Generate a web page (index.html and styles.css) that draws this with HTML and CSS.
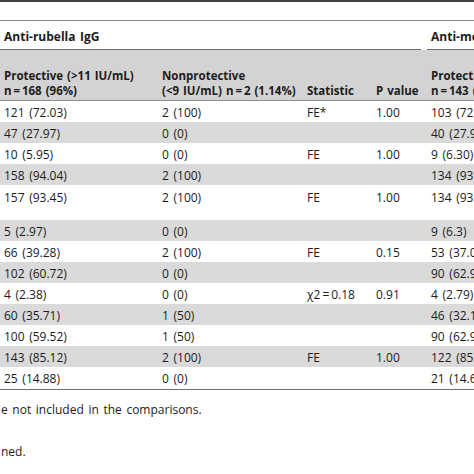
FILE: index.html
```html
<!DOCTYPE html>
<html>
<head>
<meta charset="utf-8">
<link rel="stylesheet" href="styles.css">
</head>
<body>
<div class="frame">
  <div class="topband"></div>
  <table class="t">
    <colgroup>
      <col class="c1"><col class="c2"><col class="c3"><col class="c4"><col class="c5"><col class="c6">
    </colgroup>
    <thead>
      <tr class="grp">
        <th colspan="4"><div class="gl gl-left">Anti-rubella IgG</div></th>
        <th colspan="2"><div class="gl">Anti-measles IgG</div></th>
      </tr>
      <tr class="hdr">
        <th>Protective (&gt;11 IU/mL)<br>n&thinsp;=&thinsp;168 (96%)</th>
        <th>Nonprotective<br>(&lt;9 IU/mL) n&thinsp;=&thinsp;2 (1.14%)</th>
        <th>Statistic</th>
        <th>P value</th>
        <th>Protective (&gt;11 IU/mL)<br>n&thinsp;=&thinsp;143 (95%)</th>
        <th>Nonprotective</th>
      </tr>
    </thead>
    <tbody>
      <tr><td>121 (72.03)</td><td>2 (100)</td><td>FE*</td><td>1.00</td><td>103 (72.03)</td><td></td></tr>
      <tr class="g"><td>47 (27.97)</td><td>0 (0)</td><td></td><td></td><td>40 (27.97)</td><td></td></tr>
      <tr><td>10 (5.95)</td><td>0 (0)</td><td>FE</td><td>1.00</td><td>9 (6.30)</td><td></td></tr>
      <tr class="g"><td>158 (94.04)</td><td>2 (100)</td><td></td><td></td><td>134 (93.70)</td><td></td></tr>
      <tr class="tall"><td>157 (93.45)</td><td>2 (100)</td><td>FE</td><td>1.00</td><td>134 (93.70)</td><td></td></tr>
      <tr class="g"><td>5 (2.97)</td><td>0 (0)</td><td></td><td></td><td>9 (6.3)</td><td></td></tr>
      <tr><td>66 (39.28)</td><td>2 (100)</td><td>FE</td><td>0.15</td><td>53 (37.06)</td><td></td></tr>
      <tr class="g"><td>102 (60.72)</td><td>0 (0)</td><td></td><td></td><td>90 (62.94)</td><td></td></tr>
      <tr><td>4 (2.38)</td><td>0 (0)</td><td>χ2&thinsp;=&thinsp;0.18</td><td>0.91</td><td>4 (2.79)</td><td></td></tr>
      <tr class="g"><td>60 (35.71)</td><td>1 (50)</td><td></td><td></td><td>46 (32.16)</td><td></td></tr>
      <tr><td>100 (59.52)</td><td>1 (50)</td><td></td><td></td><td>90 (62.93)</td><td></td></tr>
      <tr class="g"><td>143 (85.12)</td><td>2 (100)</td><td>FE</td><td>1.00</td><td>122 (85.31)</td><td></td></tr>
      <tr class="last"><td>25 (14.88)</td><td>0 (0)</td><td></td><td></td><td>21 (14.69)</td><td></td></tr>
    </tbody>
  </table>
  <div class="notes">
    <p>e not included in the comparisons.</p>
    <p>&nbsp;</p>
    <p>ned.</p>
  </div>
</div>
</body>
</html>
```

FILE: styles.css
```css
html, body {
  margin: 0;
  padding: 0;
  background: #fff;
}
body {
  width: 474px;
  height: 474px;
  overflow: hidden;
  font-family: "Open Sans", "DejaVu Sans", sans-serif;
  font-size: 12px;
  word-spacing: 1.5px;
  color: #1c1c1c;
}
.frame {
  width: 474px;
  overflow: hidden;
}
.topband {
  height: 20px;
  border-top: 2px solid #3f3f3f;
  box-sizing: border-box;
}
.t {
  table-layout: fixed;
  width: 732px;
  border-collapse: separate;
  border-spacing: 0;
  border-top: 1px solid #8a8a8a;
}
.c1 { width: 158px; }
.c2 { width: 145px; }
.c3 { width: 69px; }
.c4 { width: 55px; }
.c5 { width: 160px; }
.c6 { width: 145px; }
th, td {
  text-align: left;
  padding: 0 4px;
  white-space: nowrap;
  overflow: hidden;
  line-height: 14px;
}
.grp th {
  padding: 0;
  height: 29px;
  vertical-align: bottom;
  font-weight: bold;
}
.gl {
  padding: 0 4px 5px;
  border-bottom: 1px solid #6e6e6e;
}
.gl-left {
  margin-right: 6px;
}
.hdr th {
  background: #d3d3d3;
  font-weight: bold;
  font-size: 11.5px;
  word-spacing: 1px;
  line-height: 15px;
  height: 51px;
  box-sizing: border-box;
  vertical-align: bottom;
  padding-bottom: 2px;
  border-bottom: 1px solid #8c8c8c;
}
td {
  height: 21px;
  box-sizing: border-box;
  vertical-align: top;
  padding-top: 5px;
}
tr.g td {
  background: #dadada;
}
tr.tall td {
  height: 35px;
  padding-top: 6px;
}
tr.last td {
  height: 23px;
  border-bottom: 1px solid #6e6e6e;
}
.notes {
  padding-top: 9px;
}
.notes p {
  margin: 0;
  line-height: 21px;
  padding-left: 1px;
}
```
